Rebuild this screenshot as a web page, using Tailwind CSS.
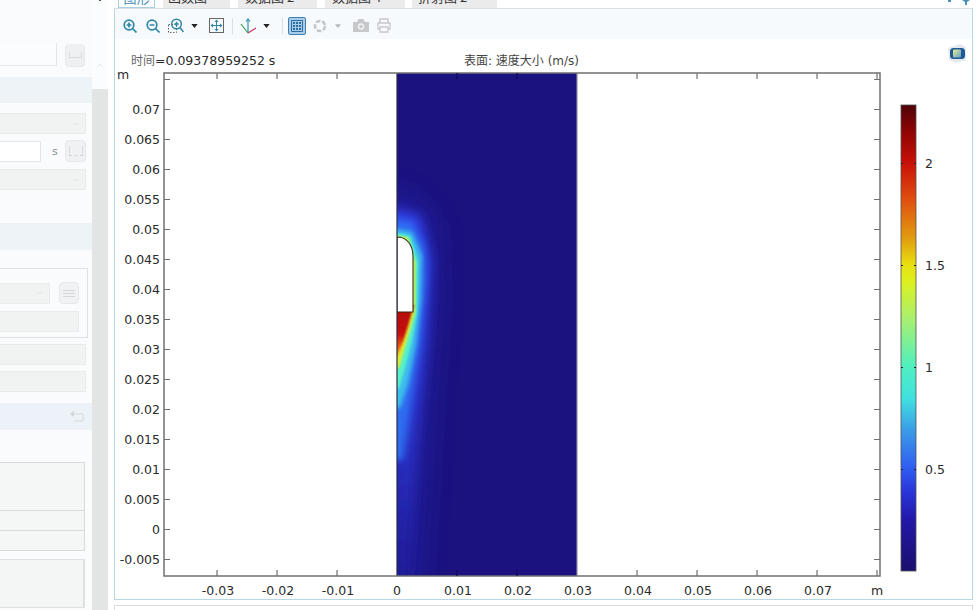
<!DOCTYPE html>
<html lang="zh-CN">
<head>
<meta charset="UTF-8">
<title>图形</title>
<script src="https://cdn.jsdelivr.net/npm/@tailwindcss/browser@4"></script>
</head>
<body class="bg-white overflow-hidden font-['DejaVu_Sans','Noto_Sans_CJK_SC',sans-serif]">
<div class="flex w-[976px] h-[610px] overflow-hidden">

  <!-- left settings pane, faded out -->
  <aside class="w-[92px] h-full bg-[#f9fbfd] flex flex-col shrink-0">
    <div class="h-[67px] flex items-end pr-[7px] gap-[8px]">
      <div class="flex-1 h-[23px] border border-[#e4e7e8] border-t-0 border-l-0 bg-[#fbfcfd] mb-px"></div>
      <div class="w-[20px] h-[23px] bg-[#eff0f1] rounded-sm border border-[#e6e8e9] border-t-0 flex items-center justify-center">
        <div class="w-[13px] h-[6px] border border-t-0 border-[#d8dadc]"></div>
      </div>
    </div>
    <div class="h-[26px] mt-[10px] bg-[#eef3f7]"></div>
    <div class="h-[21px] mt-[10px] mr-[6px] bg-[#f1f3f3] border border-[#e9ebeb] border-l-0 flex items-center justify-end pr-[6px]">
      <svg width="7" height="4" viewBox="0 0 7 4"><path d="M1 1l2.500 2L6 1" stroke="#e2e4e4" fill="none"/></svg>
    </div>
    <div class="flex items-center h-[22px] mt-[6px] mr-[6px]">
      <div class="w-[41px] h-[21px] bg-white border border-[#e4e7e8] border-l-0"></div>
      <span class="ml-[11px] text-[11px] text-[#8d9091] leading-none">s</span>
      <div class="ml-auto w-[21px] h-[22px] bg-[#f0f1f2] border border-[#e6e8e9] rounded-sm flex items-center justify-center">
        <div class="w-[14px] h-[10px] border border-t-0 border-dashed border-[#d5d8da]"></div>
      </div>
    </div>
    <div class="h-[21px] mt-[7px] mr-[6px] bg-[#f1f3f3] border border-[#e9ebeb] border-l-0 flex items-center justify-end pr-[6px]">
      <svg width="7" height="4" viewBox="0 0 7 4"><path d="M1 1l2.500 2L6 1" stroke="#e2e4e4" fill="none"/></svg>
    </div>
    <div class="h-[27px] mt-[33px] bg-[#eef3f7]"></div>
    <div class="mt-[18px] mr-[4px] h-[70px] border border-[#dfe1e2] border-l-0 pt-[13px] flex flex-col gap-[7px]">
      <div class="flex items-center pr-[8px]">
        <div class="w-[50px] h-[21px] bg-[#f1f2f2] border border-[#eaecec] border-l-0 flex items-center justify-end pr-[6px]">
          <svg width="7" height="4" viewBox="0 0 7 4"><path d="M1 1l2.500 2L6 1" stroke="#e2e4e4" fill="none"/></svg>
        </div>
        <div class="ml-auto w-[20px] h-[22px] bg-[#f1f2f3] border border-[#e6e8e9] rounded-sm flex flex-col items-center justify-center gap-[2px]">
          <div class="w-[12px] h-px bg-[#d5d8da]"></div>
          <div class="w-[12px] h-px bg-[#d5d8da]"></div>
          <div class="w-[12px] h-px bg-[#d5d8da]"></div>
        </div>
      </div>
      <div class="w-[79px] h-[21px] bg-[#f1f2f2] border border-[#eaecec] border-l-0"></div>
    </div>
    <div class="h-[21px] mt-[6px] mr-[6px] bg-[#f1f3f3] border border-[#e9ebeb] border-l-0"></div>
    <div class="h-[21px] mt-[6px] mr-[6px] bg-[#f1f3f3] border border-[#e9ebeb] border-l-0"></div>
    <div class="h-[27px] mt-[11px] bg-[#edf2f8] flex items-center justify-end pr-[8px]">
      <svg width="14" height="11" viewBox="0 0 14 11" fill="none"><path d="M3 3h10v7H4" stroke="#d5d9dc"/><path d="M0 3l4-3v6z" fill="#cfd4d8"/></svg>
    </div>
    <div class="mt-[32px] mr-[7px] border border-[#d9dbdb] border-l-0 bg-[#f5f6f6] flex flex-col">
      <div class="h-[47px]"></div>
      <div class="h-[20px] border-t border-[#d9dbdb]"></div>
      <div class="h-[20px] border-t border-[#d9dbdb]"></div>
    </div>
    <div class="mt-[8px] mr-[7px] h-[49px] border border-[#dfe1e1] border-l-0 border-r-[2px] bg-[#f4f5f5]"></div>
  </aside>

  <!-- scrollbar -->
  <div class="w-[16px] h-full bg-[#e3e5e5] shrink-0 flex flex-col relative">
    <div class="h-[89px] bg-[#fbfcfd] flex items-start justify-center pt-[62px]">
      <svg width="8" height="6" viewBox="0 0 8 6"><path d="M1 5l3-3 3 3" stroke="#e5e6e7" fill="none"/></svg>
    </div>
    <div class="absolute left-[7px] top-0 w-[2px] h-px bg-[#555]"></div>
  </div>

  <!-- graphics window -->
  <main class="ml-[6px] w-[859px] h-full flex flex-col shrink-0">
    <div class="h-[9px] flex overflow-hidden relative pl-[4px] text-[13px] font-['Noto_Sans_CJK_SC','DejaVu_Sans',sans-serif] leading-[18px] border-b border-[#d5dfe5]">
      <div class="w-[37px] h-[20px] -mt-[12px] border border-[#a9cfe2] bg-white text-[#3c8ab5] text-center whitespace-nowrap">图形</div>
      <div class="w-[67px] h-[20px] -mt-[12px] ml-[8px] bg-[#ebebeb] text-[#333] pl-[5px] whitespace-nowrap">函数图</div>
      <div class="w-[79px] h-[20px] -mt-[12px] ml-[8px] bg-[#ebebeb] text-[#333] pl-[7px] whitespace-nowrap">数据图 2</div>
      <div class="w-[80px] h-[20px] -mt-[12px] ml-[8px] bg-[#ebebeb] text-[#333] pl-[7px] whitespace-nowrap">数据图 4</div>
      <div class="w-[85px] h-[20px] -mt-[12px] ml-[7px] bg-[#ebebeb] text-[#333] pl-[6px] whitespace-nowrap">折射图 2</div>
      <svg class="absolute right-[22px] top-0" width="3" height="2" viewBox="0 0 3 2"><rect width="3" height="2" fill="#4a8fb5"/></svg>
      <svg class="absolute right-[3px] top-0" width="8" height="5" viewBox="0 0 8 5"><path d="M0 0h8L5 2v3H3V2z" fill="#4a8fb5"/></svg>
    </div>
    <div class="w-[859px] h-[591px] border border-t-0 border-[#b9d8e6] flex flex-col">
      <!-- toolbar -->
      <div class="h-[30px] bg-[#f7fafd] flex items-center pl-[8px] pt-[3px] shrink-0">
        <svg class="w-[14px] h-[14px]" viewBox="0 0 14 14" fill="none" stroke="#2f86a8" stroke-width="1.700"><circle cx="6" cy="6" r="4.800"/><path d="M9.500 9.500L13.500 13.500M3.600 6h4.800M6 3.600v4.800"/></svg>
        <svg class="w-[14px] h-[14px] ml-[9px]" viewBox="0 0 14 14" fill="none" stroke="#2f86a8" stroke-width="1.700"><circle cx="6" cy="6" r="4.800"/><path d="M9.500 9.500L13.500 13.500M3.600 6h4.800"/></svg>
        <svg class="w-[16px] h-[16px] ml-[8px]" viewBox="0 0 16 16" fill="none"><rect x="0.500" y="6.500" width="8" height="8" stroke="#666" stroke-dasharray="1.500 1.500"/><circle cx="8.500" cy="6" r="4.800" stroke="#2f86a8" stroke-width="1.500"/><path d="M12 9.500l3.500 4.500M6.300 6h4.400M8.500 3.800v4.400" stroke="#2f86a8" stroke-width="1.500"/></svg>
        <svg class="w-[7px] h-[4px] ml-[7px]" viewBox="0 0 8 5"><path d="M0 0h8L4 5z" fill="#222"/></svg>
        <svg class="w-[15px] h-[15px] ml-[11px]" viewBox="0 0 15 15" fill="none"><rect x="0.500" y="0.500" width="14" height="14" stroke="#666"/><path d="M7.500 3v9M3 7.500h9" stroke="#2f86a8"/><path d="M7.500 1.500l2 2.500h-4zM7.500 13.500l2-2.500h-4zM1.500 7.500L4 5.500v4zM13.500 7.500L11 5.500v4z" fill="#2f86a8"/></svg>
        <div class="w-px h-[16px] bg-[#dcdfe2] ml-[8px]"></div>
        <svg class="w-[16px] h-[16px] ml-[7px]" viewBox="0 0 16 16" fill="none" stroke-width="1.200"><path d="M8 15V1" stroke="#2f97a8"/><path d="M8 15l8-5" stroke="#c8386a"/><path d="M8 15L1 6" stroke="#3b9a4d"/><path d="M6 3.500L8 1l2 2.500" stroke="#2f97a8"/></svg>
        <svg class="w-[7px] h-[4px] ml-[7px]" viewBox="0 0 8 5"><path d="M0 0h8L4 5z" fill="#222"/></svg>
        <div class="w-px h-[16px] bg-[#dcdfe2] ml-[12px]"></div>
        <div class="w-[18px] h-[18px] ml-[5px] bg-[#a8cdea] border border-[#4080b0] rounded-[2px] flex items-center justify-center">
          <svg class="w-[12px] h-[12px]" viewBox="0 0 12 12" fill="#2c6ea0"><path d="M0.500 0.500h11v11h-11z" fill="none" stroke="#2c6ea0"/><path d="M2 2h2v2H2zM5 2h2v2H5zM8 2h2v2H8zM2 5h2v2H2zM5 5h2v2H5zM8 5h2v2H8zM2 8h2v2H2zM5 8h2v2H5zM8 8h2v2H8z"/></svg>
        </div>
        <svg class="w-[14px] h-[14px] ml-[7px]" viewBox="0 0 14 14" fill="none" stroke="#c3c6c8" stroke-width="2.600"><circle cx="7" cy="7" r="5" stroke-dasharray="4.500 1.800"/></svg>
        <svg class="w-[6px] h-[4px] ml-[8px]" viewBox="0 0 8 5"><path d="M0 0h8L4 5z" fill="#b5b8ba"/></svg>
        <svg class="w-[16px] h-[13px] ml-[12px]" viewBox="0 0 16 13"><path d="M0 3h4l1.500-3h5L12 3h4v10H0z" fill="#c6c8ca"/><circle cx="8" cy="7.500" r="3.200" fill="#f2f3f4"/><circle cx="8" cy="7.500" r="1.800" fill="#c6c8ca"/></svg>
        <svg class="w-[14px] h-[15px] ml-[8px]" viewBox="0 0 14 15" fill="none" stroke="#c6c8ca" stroke-width="1.300"><path d="M3 5V1h8v4M3 11H1V5h12v6h-2M3 9h8v5H3z"/></svg>
      </div>

      <!-- plot -->
      <div class="flex-1 bg-white relative">
        <svg width="857" height="560" viewBox="115 39 857 560" class="block" font-family="'DejaVu Sans','Noto Sans CJK SC',sans-serif" font-size="12.500" fill="#2a2a2a">
          <defs>
            <linearGradient id="jet" x1="0" y1="1" x2="0" y2="0">
              <stop offset="0" stop-color="#1b0f6e"/>
              <stop offset="0.11" stop-color="#2218a8"/>
              <stop offset="0.17" stop-color="#2a35d8"/>
              <stop offset="0.22" stop-color="#2f5cf0"/>
              <stop offset="0.30" stop-color="#3a9ae8"/>
              <stop offset="0.37" stop-color="#40e0e0"/>
              <stop offset="0.44" stop-color="#50f0c0"/>
              <stop offset="0.54" stop-color="#a8f070"/>
              <stop offset="0.62" stop-color="#dcf020"/>
              <stop offset="0.657" stop-color="#e8e010"/>
              <stop offset="0.71" stop-color="#e0a010"/>
              <stop offset="0.796" stop-color="#e05010"/>
              <stop offset="0.876" stop-color="#c81008"/>
              <stop offset="0.946" stop-color="#8c0404"/>
              <stop offset="1" stop-color="#4e0208"/>
            </linearGradient>
            <linearGradient id="wake" x1="0" y1="0" x2="0" y2="1">
              <stop offset="0" stop-color="#b00606"/>
              <stop offset="0.55" stop-color="#c81008"/>
              <stop offset="0.8" stop-color="#f06010"/>
              <stop offset="1" stop-color="#e8d020"/>
            </linearGradient>
            <linearGradient id="wallglow" x1="0" y1="0" x2="0" y2="1">
              <stop offset="0" stop-color="#3040e8"/>
              <stop offset="0.6" stop-color="#2a32c8"/>
              <stop offset="1" stop-color="#1f1a98"/>
            </linearGradient>
            <linearGradient id="icon" x1="0" y1="0" x2="1" y2="1">
              <stop offset="0" stop-color="#f0ee90"/>
              <stop offset="1" stop-color="#5aa0c8"/>
            </linearGradient>
            <filter id="b1" x="-60%" y="-30%" width="220%" height="160%"><feGaussianBlur stdDeviation="1.200"/></filter>
            <filter id="b2" x="-60%" y="-30%" width="220%" height="160%"><feGaussianBlur stdDeviation="2"/></filter>
            <filter id="b3" x="-80%" y="-30%" width="260%" height="160%"><feGaussianBlur stdDeviation="3.500"/></filter>
            <filter id="b5" x="-80%" y="-30%" width="260%" height="160%"><feGaussianBlur stdDeviation="5.500"/></filter>
            <filter id="b9" x="-120%" y="-30%" width="340%" height="160%"><feGaussianBlur stdDeviation="10"/></filter>
            <clipPath id="dom"><rect x="397" y="73" width="180" height="503"/></clipPath>
          </defs>

          <text x="131" y="65"><tspan fill="#666" font-size="12">时间</tspan>=0.09378959252 s</text>
          <text x="464" y="65" fill="#444" font-size="12">表面: 速度大小 (m/s)</text>
          <text x="117" y="79">m</text>

          <!-- velocity field -->
          <g clip-path="url(#dom)">
            <rect x="397" y="73" width="180" height="503" fill="#1b1280"/>
            <path d="M380 590H424L434 420L442 300L440 225L418 195L380 185z" fill="#2022a4" opacity="0.55" filter="url(#b9)"/>
            <path d="M380 575H410L418 440L428 340L432 260L420 215L380 205z" fill="url(#wallglow)" filter="url(#b5)"/>
            <path d="M380 460H403L412 400L420 345L426 280L424 245L412 222L380 216z" fill="#2f6cf0" filter="url(#b3)"/>
            <path d="M380 408H400L408 384L416 345L421 300L422 256L412 232L380 226z" fill="#3cc0ec" filter="url(#b2)"/>
            <path d="M380 388H399L405 368L412 340L417 312L418 262L410 236L380 230z" fill="#58f0c8" filter="url(#b1)"/>
            <path d="M380 368H399L404 350L410 330L415 312L415 262L408 238L380 233z" fill="#dcee30" filter="url(#b1)"/>
            <!-- wake under the bubble -->
            <path d="M380 358H397L403 342L408 326L414 305H380z" fill="url(#wake)" filter="url(#b1)"/>
            <!-- bubble -->
            <path d="M397 237C407 237 413 245 413 257V312H397z" fill="#fff" stroke="#3a2a18" stroke-width="1.100"/>
          </g>
          <path d="M397 73V576" stroke="#2a2a44" stroke-width="1.200"/>
          <path d="M577 73V576" stroke="#8f8ca8" stroke-width="1.200"/>

          <!-- axes box -->
          <rect x="164" y="73" width="716" height="503" fill="none" stroke="#707070" stroke-width="1.500"/>
          <g stroke="#707070" stroke-width="1.200">
            <path d="M217 73v6M277 73v6M337 73v6M637 73v6M697 73v6M757 73v6M817 73v6M877 73v6"/>
            <path d="M217 576v-6M277 576v-6M337 576v-6M637 576v-6M697 576v-6M757 576v-6M817 576v-6M877 576v-6"/>
            <path d="M164 79.500h6M164 109.500h6M164 139.500h6M164 169.500h6M164 199.500h6M164 229.500h6M164 259.500h6M164 289.500h6M164 319.500h6M164 349.500h6M164 379.500h6M164 409.500h6M164 439.500h6M164 469.500h6M164 499.500h6M164 529.500h6M164 559.500h6"/>
            <path d="M880 79.500h-6M880 109.500h-6M880 139.500h-6M880 169.500h-6M880 199.500h-6M880 229.500h-6M880 259.500h-6M880 289.500h-6M880 319.500h-6M880 349.500h-6M880 379.500h-6M880 409.500h-6M880 439.500h-6M880 469.500h-6M880 499.500h-6M880 529.500h-6M880 559.500h-6"/>
          </g>
          <g stroke="#0c0a58" stroke-width="1.200">
            <path d="M457 73v6M517 73v6M457 576v-6M517 576v-6"/>
          </g>

          <!-- y labels -->
          <g text-anchor="end">
            <text x="160" y="114">0.07</text>
            <text x="160" y="144">0.065</text>
            <text x="160" y="174">0.06</text>
            <text x="160" y="204">0.055</text>
            <text x="160" y="234">0.05</text>
            <text x="160" y="264">0.045</text>
            <text x="160" y="294">0.04</text>
            <text x="160" y="324">0.035</text>
            <text x="160" y="354">0.03</text>
            <text x="160" y="384">0.025</text>
            <text x="160" y="414">0.02</text>
            <text x="160" y="444">0.015</text>
            <text x="160" y="474">0.01</text>
            <text x="160" y="504">0.005</text>
            <text x="160" y="534">0</text>
            <text x="160" y="564">-0.005</text>
          </g>
          <!-- x labels -->
          <g text-anchor="middle">
            <text x="218" y="595">-0.03</text>
            <text x="278" y="595">-0.02</text>
            <text x="338" y="595">-0.01</text>
            <text x="397" y="595">0</text>
            <text x="458" y="595">0.01</text>
            <text x="518" y="595">0.02</text>
            <text x="578" y="595">0.03</text>
            <text x="638" y="595">0.04</text>
            <text x="698" y="595">0.05</text>
            <text x="758" y="595">0.06</text>
            <text x="818" y="595">0.07</text>
          </g>
          <text x="871" y="595">m</text>

          <!-- colour legend -->
          <rect x="901" y="105" width="15" height="466" fill="url(#jet)" stroke="#505050" stroke-opacity="0.8" stroke-width="1"/>
          <g stroke="#222" stroke-width="1">
            <path d="M901 163.500h2M914 163.500h2M901 265.500h2M914 265.500h2M901 367.500h2M914 367.500h2M901 469.500h2M914 469.500h2"/>
          </g>
          <text x="925" y="168">2</text>
          <text x="925" y="270">1.5</text>
          <text x="925" y="372">1</text>
          <text x="925" y="474">0.5</text>

          <!-- corner icon -->
          <path d="M948 48L960 44L966 47L966 60L956 63L949 60z" fill="#e6e9f0"/>
          <rect x="950" y="48" width="15" height="11" rx="3.500" fill="#1f5a96"/>
          <rect x="953" y="49.500" width="8" height="8" rx="1" fill="url(#icon)"/>
        </svg>
      </div>
    </div>
    <div class="h-[5px]"></div>
    <div class="h-[5px] w-[859px] border border-b-0 border-[#d5dde2]"></div>
  </main>
</div>
</body>
</html>
